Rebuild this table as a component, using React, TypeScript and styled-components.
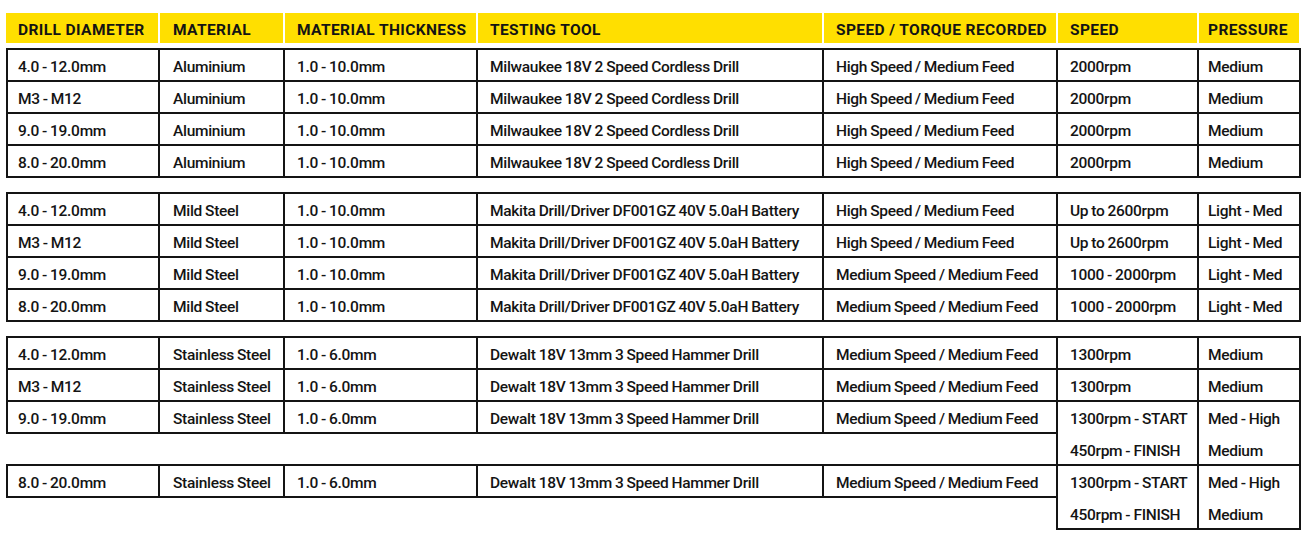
import React from 'react';
import styled, { createGlobalStyle } from 'styled-components';

/**
 * Drill test results table: a yellow header bar above four bordered groups
 * of rows, one per material. The last rows of the stainless group carry a
 * two-line speed / pressure cell that hangs below the row.
 */

type Row = {
  diameter: string;
  material: string;
  thickness: string;
  tool: string;
  torque: string;
  speed: string[];
  pressure: string[];
};

type Group = { rows: Row[]; attached?: boolean };

const COLUMNS = [152, 125, 193, 346, 234, 141, 102];
const PADS = [10, 13, 12, 12, 12, 12, 9];
const HEADINGS = [
  'Drill Diameter',
  'Material',
  'Material Thickness',
  'Testing Tool',
  'Speed / Torque Recorded',
  'Speed',
  'Pressure',
];

const INK = '#141414';
const YELLOW = '#ffdf00';

const GlobalStyle = createGlobalStyle`
  body {
    margin: 0;
    background: #fff;
    font-family: Roboto, "Liberation Sans", sans-serif;
    color: ${INK};
  }
`;

const Page = styled.main`
  padding: 13px 0 20px 6px;
`;

const HeaderBar = styled.div`
  display: grid;
  grid-template-columns: ${COLUMNS.map(w => `${w}px`).join(' ')};
  height: 30px;
  margin-bottom: 5px;
`;

const HeadCell = styled.div<{ $pad: number }>`
  display: flex;
  align-items: center;
  margin-left: 2px;
  padding: 3px 0 0 ${p => p.$pad}px;
  background: ${YELLOW};
  font-size: 15.5px;
  font-weight: 700;
  letter-spacing: 0.4px;
  text-transform: uppercase;
  white-space: nowrap;

  &:first-child {
    margin-left: 0;
    padding-left: ${p => p.$pad + 2}px;
  }
`;

const GroupGrid = styled.section<{ $attached?: boolean }>`
  display: grid;
  grid-template-columns: ${COLUMNS.map(w => `${w}px`).join(' ')};
  grid-auto-rows: 32px;
  margin-top: ${p => (p.$attached ? '0' : '16px')};

  &:first-of-type {
    margin-top: 0;
  }
`;

// * every cell reaches 2px into its right and lower neighbours so
// * that the borders overlap into single 2px rules
const Cell = styled.div<{ $pad: number; $tall?: boolean }>`
  display: flex;
  flex-direction: column;
  justify-content: ${p => (p.$tall ? 'flex-start' : 'center')};
  align-self: stretch;
  margin: 0 -2px -2px 0;
  padding: ${p => (p.$tall ? '1px' : '3px')} 0 0 ${p => p.$pad}px;
  border: 2px solid ${INK};
  background: #fff;
  font-size: 15.5px;
  font-weight: 500;
  letter-spacing: -0.3px;
  word-spacing: -0.5px;
  white-space: nowrap;
  grid-row: ${p => (p.$tall ? 'span 2' : 'auto')};
`;

const Line = styled.span`
  display: flex;
  align-items: center;
  flex: 0 0 32px;
`;

const steel = (diameter: string, speed: string[], pressure: string[]): Row => ({
  diameter,
  material: 'Stainless Steel',
  thickness: '1.0 - 6.0mm',
  tool: 'Dewalt 18V 13mm 3 Speed Hammer Drill',
  torque: 'Medium Speed / Medium Feed',
  speed,
  pressure,
});

const DIAMETERS = ['4.0 - 12.0mm', 'M3 - M12', '9.0 - 19.0mm', '8.0 - 20.0mm'];
const HIGH = 'High Speed\u2009/ Medium Feed';
const MED = 'Medium Speed / Medium Feed';

const GROUPS: Group[] = [
  {
    rows: DIAMETERS.map(diameter => ({
      diameter,
      material: 'Aluminium',
      thickness: '1.0 - 10.0mm',
      tool: 'Milwaukee 18V 2 Speed Cordless Drill',
      torque: HIGH,
      speed: ['2000rpm'],
      pressure: ['Medium'],
    })),
  },
  {
    rows: DIAMETERS.map((diameter, i) => ({
      diameter,
      material: 'Mild Steel',
      thickness: '1.0 - 10.0mm',
      tool: 'Makita Drill/Driver DF001GZ 40V 5.0aH Battery',
      torque: i < 2 ? HIGH : MED,
      speed: [i < 2 ? 'Up to 2600rpm' : '1000 - 2000rpm'],
      pressure: ['Light - Med'],
    })),
  },
  {
    rows: [
      steel('4.0 - 12.0mm', ['1300rpm'], ['Medium']),
      steel('M3 - M12', ['1300rpm'], ['Medium']),
      steel('9.0 - 19.0mm', ['1300rpm - START', '450rpm - FINISH'], ['Med - High', 'Medium']),
    ],
  },
  {
    attached: true,
    rows: [steel('8.0 - 20.0mm', ['1300rpm - START', '450rpm - FINISH'], ['Med - High', 'Medium'])],
  },
];

const Multi = ({ lines, pad }: { lines: string[]; pad: number }) =>
  lines.length > 1 ? (
    <Cell $pad={pad} $tall>
      {lines.map(l => (
        <Line key={l}>{l}</Line>
      ))}
    </Cell>
  ) : (
    <Cell $pad={pad}>{lines[0]}</Cell>
  );

export default function App() {
  return (
    <>
      <GlobalStyle />
      <Page>
        <HeaderBar>
          {HEADINGS.map((h, i) => (
            <HeadCell key={h} $pad={PADS[i]}>{h}</HeadCell>
          ))}
        </HeaderBar>
        {GROUPS.map((group, g) => (
          <GroupGrid key={g} $attached={group.attached}>
            {group.rows.map((row, r) => (
              <React.Fragment key={r}>
                <Cell $pad={PADS[0]}>{row.diameter}</Cell>
                <Cell $pad={PADS[1]}>{row.material}</Cell>
                <Cell $pad={PADS[2]}>{row.thickness}</Cell>
                <Cell $pad={PADS[3]}>{row.tool}</Cell>
                <Cell $pad={PADS[4]}>{row.torque}</Cell>
                <Multi lines={row.speed} pad={PADS[5]} />
                <Multi lines={row.pressure} pad={PADS[6]} />
              </React.Fragment>
            ))}
          </GroupGrid>
        ))}
      </Page>
    </>
  );
}
